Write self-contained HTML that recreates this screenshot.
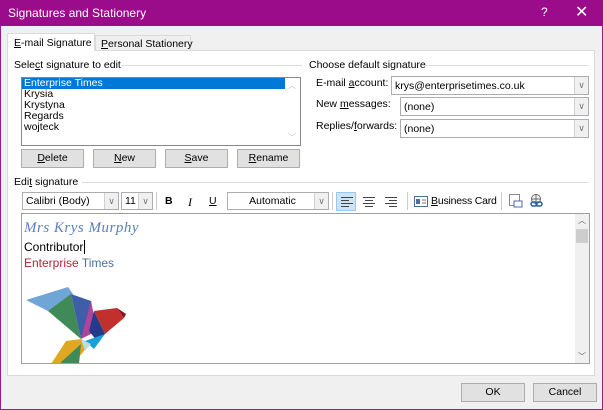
<!DOCTYPE html>
<html><head><meta charset="utf-8"><style>
*{box-sizing:border-box;margin:0;padding:0}
body{width:603px;height:410px;overflow:hidden;font-family:"Liberation Sans",sans-serif;font-size:10.5px;color:#000;background:#f0f0f0;position:relative}
.a{position:absolute;white-space:nowrap}
.win{left:0;top:0;width:603px;height:410px;border:1px solid #9b1a8f}
.title{left:0;top:0;width:603px;height:26px;background:#9b0c8b;color:#fff;font-size:12px}
.btn{position:absolute;background:#e1e1e1;border:1px solid #adadad;text-align:center;line-height:17px;font-size:10.5px;white-space:nowrap}
.dd{position:absolute;background:#fff;border:1px solid #abadb3;line-height:16px;padding-left:3px;font-size:10.5px;white-space:nowrap}
.dd .ar{position:absolute;right:0;top:0;width:14px;height:100%;border-left:1px solid #d0d0d0;background:#f0f0f0;color:#777;font-size:9px;text-align:center}
.grp{position:absolute;height:1px;background:#dcdcdc}
u{text-decoration:underline}
</style></head><body>
<div class="a win"></div>
<div class="a title"><span class="a" style="left:8px;top:6px">Signatures and Stationery</span><span class="a" style="left:541px;top:5px">?</span><span class="a" style="left:575px;top:2px;font-size:16px">✕</span></div>
<div class="a" style="left:7px;top:50px;width:588px;height:326px;background:#fff;border:1px solid #dadada"></div>
<div class="a" style="left:7px;top:33px;width:88px;height:18px;background:#fff;border:1px solid #dadada;border-bottom:none;padding:3px 0 0 6px"><u>E</u>-mail Signature</div>
<div class="a" style="left:95px;top:35px;width:96px;height:15px;background:#f0f0f0;border:1px solid #dadada;border-bottom:none;padding:2px 0 0 5px"><u>P</u>ersonal Stationery</div>
<div class="a" style="left:14px;top:59px;background:#fff;padding-right:4px">Sele<u>c</u>t signature to edit</div>
<div class="grp" style="left:122px;top:65px;width:180px"></div>
<div class="a" style="left:309px;top:59px;background:#fff;padding-right:4px">Choose default signature</div>
<div class="grp" style="left:424px;top:65px;width:165px"></div>
<div class="a" style="left:21px;top:77px;width:280px;height:69px;border:1px solid #828790;background:#fff;line-height:11px;font-size:10.5px">
<div style="background:#0078d7;color:#fff;width:263px;padding-left:2px">Enterprise Times</div>
<div style="padding-left:2px">Krysia</div><div style="padding-left:2px">Krystyna</div><div style="padding-left:2px">Regards</div><div style="padding-left:2px">wojteck</div>
<span class="a" style="right:4px;top:2px;color:#bbb;font-size:8px">︿</span><span class="a" style="right:4px;bottom:2px;color:#bbb;font-size:8px">﹀</span>
</div>
<div class="btn" style="left:21px;top:149px;width:63px;height:19px"><u>D</u>elete</div>
<div class="btn" style="left:93px;top:149px;width:63px;height:19px"><u>N</u>ew</div>
<div class="btn" style="left:165px;top:149px;width:63px;height:19px"><u>S</u>ave</div>
<div class="btn" style="left:237px;top:149px;width:63px;height:19px"><u>R</u>ename</div>
<div class="a" style="left:316px;top:77px">E-mail <u>a</u>ccount:</div>
<div class="dd" style="left:391px;top:76px;width:198px;height:19px;padding-top:1px">krys@enterprisetimes.co.uk<span class="ar">∨</span></div>
<div class="a" style="left:316px;top:98px">New <u>m</u>essages:</div>
<div class="dd" style="left:400px;top:97px;width:189px;height:19px;padding-top:1px">(none)<span class="ar">∨</span></div>
<div class="a" style="left:316px;top:120px">Replies/<u>f</u>orwards:</div>
<div class="dd" style="left:400px;top:119px;width:189px;height:19px;padding-top:1px">(none)<span class="ar">∨</span></div>
<div class="a" style="left:14px;top:176px;background:#fff;padding-right:4px">Edi<u>t</u> signature</div>
<div class="grp" style="left:82px;top:182px;width:507px"></div>
<div class="dd" style="left:22px;top:192px;width:97px;height:18px">Calibri (Body)<span class="ar">∨</span></div>
<div class="dd" style="left:121px;top:192px;width:32px;height:18px">11<span class="ar">∨</span></div>
<div class="a" style="left:156px;top:192px;width:1px;height:18px;background:#ccc"></div>
<div class="a" style="left:165px;top:195px;font-weight:bold">B</div>
<div class="a" style="left:188px;top:195px;font-style:italic;font-family:'Liberation Serif',serif;font-size:12px">I</div>
<div class="a" style="left:209px;top:195px"><u>U</u></div>
<div class="dd" style="left:227px;top:192px;width:102px;height:18px;text-align:center;padding-right:14px">Automatic<span class="ar">∨</span></div>
<div class="a" style="left:332px;top:192px;width:1px;height:18px;background:#ccc"></div>
<div class="a" style="left:336px;top:192px;width:20px;height:19px;background:#cce4f7;border:1px solid #99c9ef"></div>
<svg class="a" style="left:339px;top:195px" width="60" height="12"><g stroke="#444" stroke-width="1"><path d="M2 2.5h12M2 5.5h8M2 8.5h12M2 11.5h8"/><path d="M24 2.5h12M26 5.5h8M24 8.5h12M26 11.5h8"/><path d="M46 2.5h12M50 5.5h8M46 8.5h12M50 11.5h8"/></g></svg>
<div class="a" style="left:407px;top:192px;width:1px;height:18px;background:#ccc"></div>
<svg class="a" style="left:414px;top:196px" width="14" height="11"><rect x="0.5" y="0.5" width="13" height="10" fill="#fff" stroke="#4a6fa5"/><rect x="2" y="3" width="4" height="5" fill="#4a6fa5"/><path d="M8 4h4M8 7h4" stroke="#777"/></svg>
<div class="a" style="left:431px;top:195px;letter-spacing:-0.2px"><u>B</u>usiness Card</div>
<div class="a" style="left:501px;top:192px;width:1px;height:18px;background:#ccc"></div>
<svg class="a" style="left:508px;top:193px" width="16" height="16"><rect x="1.5" y="1.5" width="10" height="11" fill="#fff" stroke="#888"/><rect x="6" y="8" width="8" height="6" fill="#fff" stroke="#4a6fa5"/></svg>
<svg class="a" style="left:529px;top:193px" width="16" height="16"><circle cx="7" cy="6" r="4.5" fill="none" stroke="#666"/><path d="M2.5 6h9M7 1.5v9" stroke="#666"/><rect x="2" y="9" width="6" height="4" rx="2" fill="none" stroke="#2b5fa0" stroke-width="1.5"/><rect x="7" y="9" width="6" height="4" rx="2" fill="none" stroke="#2b5fa0" stroke-width="1.5"/></svg>
<div class="a" style="left:21px;top:213px;width:569px;height:151px;border:1px solid #a0a0a0;background:#fff;overflow:hidden">
<div class="a" style="left:553px;top:0;width:14px;height:149px;background:#f0f0f0"><div class="a" style="left:1px;top:15px;width:12px;height:14px;background:#cdcdcd"></div><span class="a" style="left:3px;top:1px;font-size:8px;color:#555">︿</span><span class="a" style="left:3px;bottom:1px;font-size:8px;color:#555">﹀</span></div>
<div class="a" style="left:2px;top:6px;font-family:'Liberation Serif',serif;font-style:italic;font-size:15px;color:#5b7fb8;letter-spacing:0.5px">Mrs Krys Murphy</div>
<div class="a" style="left:2px;top:26px;font-size:12px">Contributor<span style="border-left:1px solid #000;margin-left:1px"></span></div>
<div class="a" style="left:2px;top:42px;font-size:12px"><span style="color:#b3263a">Enterprise</span> <span style="color:#4a6fa5">Times</span></div>
<svg class="a" style="left:0;top:70px" width="110" height="80" viewBox="21 283 110 80">
<polygon points="25,299 67,286 72,293 47,310" fill="#6fa6d6"/>
<polygon points="47,310 70,293 80,338" fill="#3f8a57"/>
<polygon points="70,293 90,300 93,318 80,338" fill="#3e5ea8"/>
<polygon points="90,300 80,338 96,330" fill="#b0439a"/>
<polygon points="93,310 116,307 123,317 104,333" fill="#c0312e"/>
<polygon points="116,307 125,313 123,317" fill="#8b1020"/>
<polygon points="93,310 104,333 96,340 88,330" fill="#243a8a"/>
<polygon points="84,340 104,333 93,348" fill="#1aa0d8"/>
<polygon points="65,340 80,338 88,344 72,363 50,363" fill="#e0a820"/>
<polygon points="58,363 80,343 78,363" fill="#3f8a57"/>
<polygon points="80,338 90,343 84,350" fill="#b7dfe0"/>
</svg>
</div>
<div class="btn" style="left:461px;top:383px;width:64px;height:19px">OK</div>
<div class="btn" style="left:533px;top:383px;width:64px;height:19px">Cancel</div>
</body></html>
